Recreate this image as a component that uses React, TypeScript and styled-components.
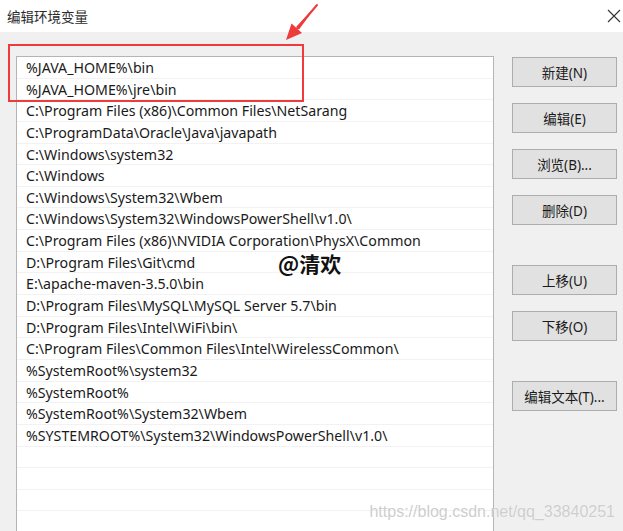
import React from "react";
import styled, { createGlobalStyle } from "styled-components";

const Global = createGlobalStyle`
  html, body { margin: 0; padding: 0; background: #f0f0f0; }
  * { box-sizing: border-box; }
`;

const FONT = `"Noto Sans", "Noto Sans CJK SC", sans-serif`;

const Window = styled.div`
  position: relative;
  width: 623px;
  height: 531px;
  overflow: hidden;
  background: #f0f0f0;
  font-family: ${FONT};
  display: flex;
  flex-direction: column;
`;

const TitleBar = styled.div`
  height: 32px;
  flex: none;
  background: #ffffff;
  display: flex;
  align-items: center;
  justify-content: space-between;
  padding: 0 0 0 7px;
`;

const Title = styled.div`
  font-size: 13.5px;
  color: #2b2b2b;
`;

const Close = styled.div`
  width: 30px;
  height: 32px;
  display: flex;
  align-items: center;
  justify-content: center;
  margin-right: -6px;
`;

const Body = styled.div`
  flex: 1;
  display: flex;
  padding: 24px 0 0 16px;
  gap: 18px;
  min-height: 0;
`;

const List = styled.div`
  width: 478px;
  flex: none;
  background: #ffffff;
  border: 1px solid #b4b4b4;
  border-bottom: none;
  display: flex;
  flex-direction: column;
  overflow: hidden;
`;

const Row = styled.div`
  height: 21.65px;
  flex: none;
  border-bottom: 1px solid #f2f2f2;
  padding-left: 9px;
  font-size: 14.2px;
  line-height: 21px;
  color: #1a1a1a;
  white-space: nowrap;
`;

const Buttons = styled.div`
  display: flex;
  flex-direction: column;
  padding-top: 1px;
`;

const Btn = styled.div<{ $gap?: number }>`
  width: 105px;
  height: 30px;
  margin-bottom: ${(p) => p.$gap ?? 16}px;
  background: #e1e1e1;
  border: 1px solid #adadad;
  display: flex;
  align-items: center;
  justify-content: center;
  font-size: 13.5px;
  color: #1a1a1a;
`;

const RedBox = styled.div`
  position: absolute;
  left: 8px;
  top: 44px;
  width: 296px;
  height: 58px;
  border: 2px solid #ee3b3b;
`;

const Arrow = styled.svg`
  position: absolute;
  left: 276px;
  top: 0;
`;

const Stamp = styled.div`
  position: absolute;
  left: 278px;
  top: 248px;
  font-family: "Noto Sans CJK SC", sans-serif;
  font-weight: 700;
  font-size: 21px;
  color: #111;
  text-shadow: 0 0 2px #fff, 1px 1px 1px #fff;
`;

const Mark = styled.div`
  position: absolute;
  right: 8px;
  bottom: 10px;
  font-family: "Liberation Sans", Arial, sans-serif;
  font-size: 16px;
  color: rgba(200, 200, 200, 0.9);
  text-shadow: 0 0 1px rgba(255, 255, 255, 0.8);
`;

const paths = [
  "%JAVA_HOME%\\bin",
  "%JAVA_HOME%\\jre\\bin",
  "C:\\Program Files (x86)\\Common Files\\NetSarang",
  "C:\\ProgramData\\Oracle\\Java\\javapath",
  "C:\\Windows\\system32",
  "C:\\Windows",
  "C:\\Windows\\System32\\Wbem",
  "C:\\Windows\\System32\\WindowsPowerShell\\v1.0\\",
  "C:\\Program Files (x86)\\NVIDIA Corporation\\PhysX\\Common",
  "D:\\Program Files\\Git\\cmd",
  "E:\\apache-maven-3.5.0\\bin",
  "D:\\Program Files\\MySQL\\MySQL Server 5.7\\bin",
  "D:\\Program Files\\Intel\\WiFi\\bin\\",
  "C:\\Program Files\\Common Files\\Intel\\WirelessCommon\\",
  "%SystemRoot%\\system32",
  "%SystemRoot%",
  "%SystemRoot%\\System32\\Wbem",
  "%SYSTEMROOT%\\System32\\WindowsPowerShell\\v1.0\\",
  "",
  "",
  "",
  "",
  "",
];

const buttons: { label: string; gap: number }[] = [
  { label: "新建(N)", gap: 16 },
  { label: "编辑(E)", gap: 16 },
  { label: "浏览(B)...", gap: 16 },
  { label: "删除(D)", gap: 40 },
  { label: "上移(U)", gap: 16 },
  { label: "下移(O)", gap: 40 },
  { label: "编辑文本(T)...", gap: 0 },
];

export default function App() {
  return (
    <Window>
      <Global />
      <TitleBar>
        <Title>编辑环境变量</Title>
        <Close>
          <svg width="14" height="14" viewBox="0 0 14 14">
            <path d="M1 1 L13 13 M13 1 L1 13" stroke="#333" strokeWidth="1.1" />
          </svg>
        </Close>
      </TitleBar>
      <Body>
        <List>
          {paths.map((p, i) => (
            <Row key={i}>{p}</Row>
          ))}
        </List>
        <Buttons>
          {buttons.map((b) => (
            <Btn key={b.label} $gap={b.gap}>
              {b.label}
            </Btn>
          ))}
        </Buttons>
      </Body>
      <RedBox />
      <Arrow width="50" height="48" viewBox="0 0 50 48">
        <path d="M41 5 L40 5.5 L20 27 L23 29.5 Z" fill="#ee3b3b" />
        <path d="M41 5 L21.5 28" stroke="#ee3b3b" strokeWidth="2" strokeLinecap="round" />
        <path d="M10 40 L15.5 23.5 L26 33 Z" fill="#ee3b3b" />
      </Arrow>
      <Stamp>@清欢</Stamp>
      <Mark>https://blog.csdn.net/qq_33840251</Mark>
    </Window>
  );
}
